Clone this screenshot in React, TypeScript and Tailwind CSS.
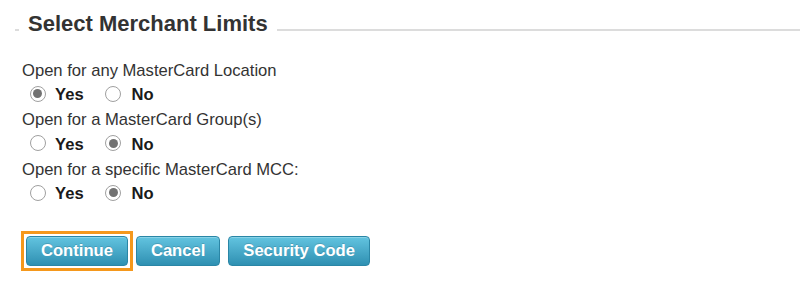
import React from "react";

function Radio({ checked }: { checked: boolean }) {
  return (
    <span className="relative -top-[1.5px] flex h-[16px] w-[16px] shrink-0 items-center justify-center rounded-full border border-[#a0a0a0] bg-white">
      {checked && <span className="h-[9px] w-[9px] rounded-full bg-[#727272]" />}
    </span>
  );
}

function Group({ label, yes }: { label: string; yes: boolean }) {
  return (
    <div>
      <div className="h-[23.5px] leading-[23.5px]">{label}</div>
      <div className="flex h-[26px] items-center pl-[7.5px] font-bold leading-[26px] text-[#1a1a1a]">
        <Radio checked={yes} />
        <span className="ml-[9.5px]">Yes</span>
        <span className="ml-[21.5px] flex items-center">
          <Radio checked={!yes} />
        </span>
        <span className="ml-[10.5px]">No</span>
      </div>
    </div>
  );
}

function Btn({ children, focus }: { children: React.ReactNode; focus?: boolean }) {
  return (
    <button className="relative h-[30px] rounded-[4px] border border-[#2a86a6] bg-gradient-to-b from-[#62c4e0] to-[#2e90b2] px-[14px] text-[16.6px] font-bold leading-[28px] text-white shadow-[inset_0_1px_0_rgba(255,255,255,0.25)] [text-shadow:0_-1px_0_rgba(0,0,0,0.15)]">
      {focus && (
        <span className="pointer-events-none absolute -inset-[6px] border-[3px] border-[#f5981c]" />
      )}
      {children}
    </button>
  );
}

export default function App() {
  return (
    <div
      className="h-[290px] w-[800px] overflow-hidden bg-white text-[16.6px] text-[#333]"
      style={{ fontFamily: '"Liberation Sans", Arial, sans-serif' }}
    >
      <div className="flex items-start pt-[11px]">
        <div className="ml-[15px] mt-[18px] h-[2px] w-[4px] bg-[#dcdcdc]" />
        <div className="px-[9px] text-[22px] font-bold leading-[25px] text-[#333]">
          Select Merchant Limits
        </div>
        <div className="mt-[18px] h-[2px] flex-1 bg-[#dcdcdc]" />
      </div>
      <div className="mt-[22.5px] pl-[22px]">
        <Group label="Open for any MasterCard Location" yes={true} />
        <Group label="Open for a MasterCard Group(s)" yes={false} />
        <Group label="Open for a specific MasterCard MCC:" yes={false} />
        <div className="ml-[4px] mt-[29px] flex gap-[8px]">
          <Btn focus>Continue</Btn>
          <Btn>Cancel</Btn>
          <Btn>Security Code</Btn>
        </div>
      </div>
    </div>
  );
}
